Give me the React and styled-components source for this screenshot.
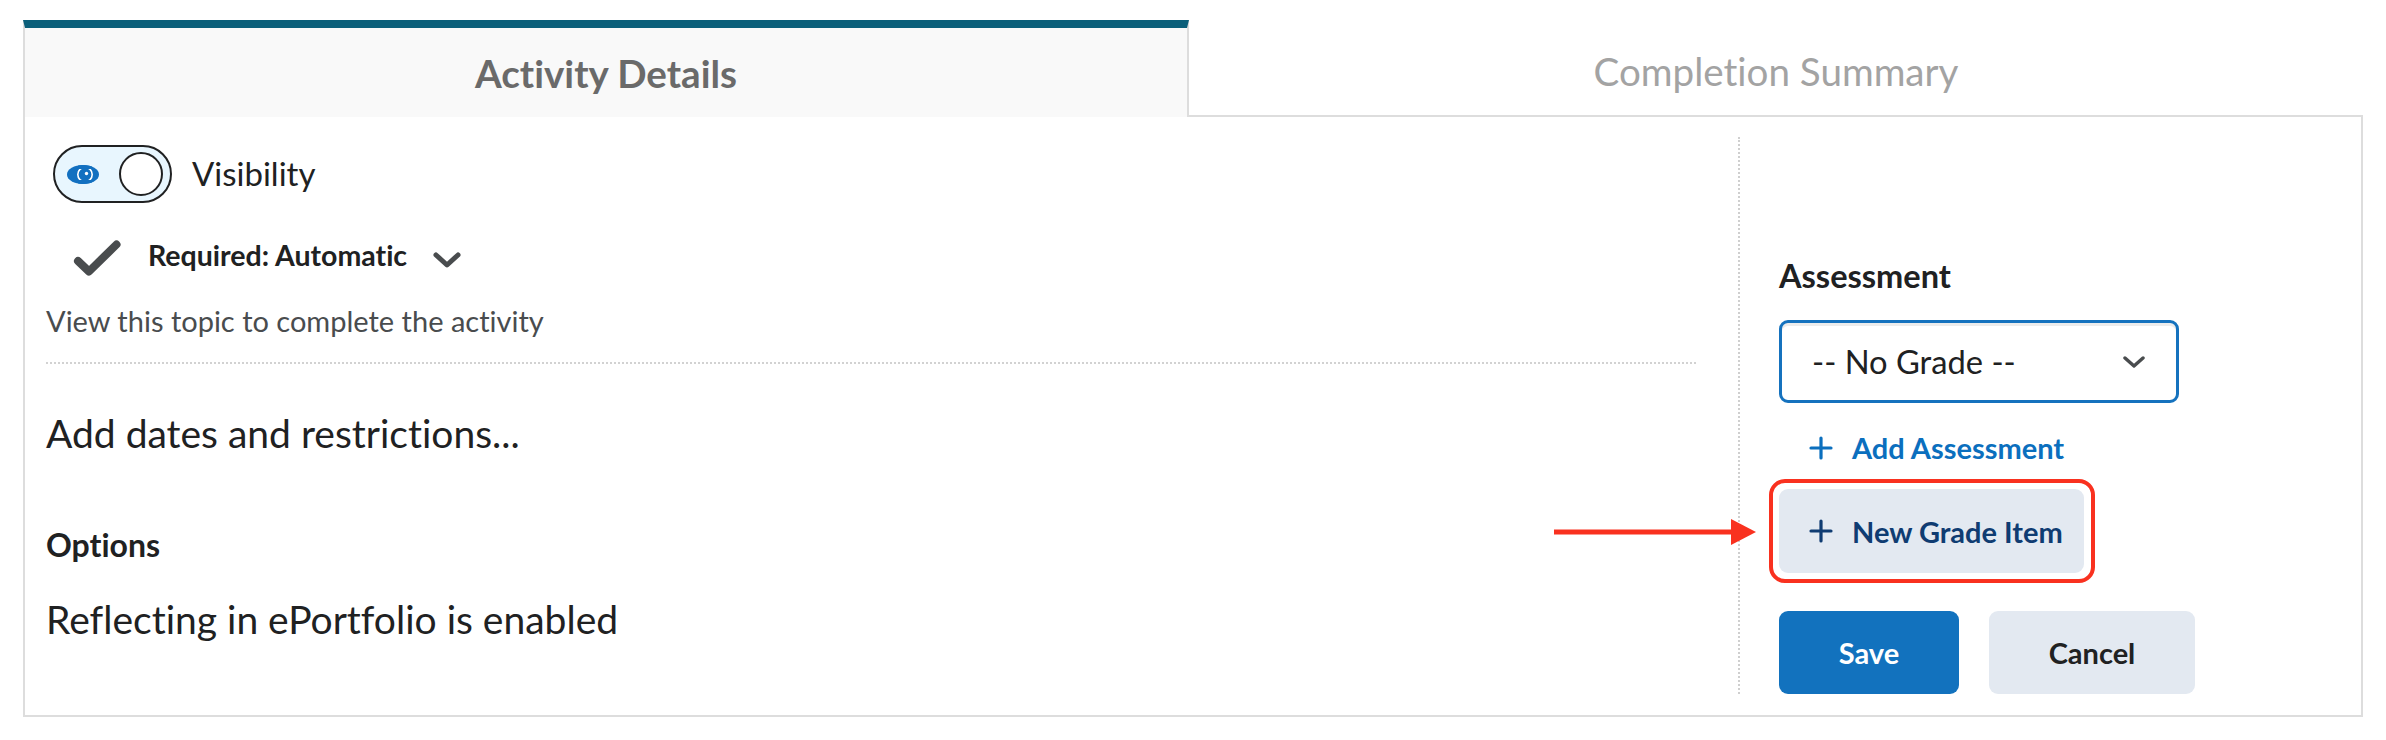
import styled, { createGlobalStyle } from 'styled-components'

const GlobalStyle = createGlobalStyle`
    body {
        margin: 0;
        background: #ffffff;
        font-family: Lato, "Open Sans", sans-serif;
        font-variant-ligatures: no-common-ligatures;
        color: #202122;
    }
`;

const Page = styled.div`
    padding: 20px 0 0 23px;
    width: 2340px;
`;

const Tabs = styled.div`
    display: flex;
    height: 97px;
`;

const Tab = styled.div`
    box-sizing: border-box;
    display: flex;
    align-items: center;
    justify-content: center;
    width: ${props => props.width}px;
    font-size: 38.6px;
    padding-top: ${props => props.active ? '0' : '7px'};
    background: ${props => props.active ? '#f9f9f9' : '#ffffff'};
    color: ${props => props.active ? '#6a6a6a' : '#a3a3a3'};
    font-weight: ${props => props.active ? 700 : 400};
    border-top: ${props => props.active ? '8px solid #0b5f7a' : 'none'};
    border-left: ${props => props.active ? '2px solid #dddddd' : 'none'};
    border-right: ${props => props.active ? '2px solid #dddddd' : 'none'};
    border-bottom: ${props => props.active ? 'none' : '2px solid #dddddd'};
`;

const Panel = styled.div`
    display: flex;
    border: 2px solid #dddddd;
    border-top: none;
    padding: 20px 0 21px;
`;

const LeftCol = styled.div`
    box-sizing: border-box;
    width: 1671px;
    padding-left: 21px;
    margin-right: 42px;
`;

const RightCol = styled.div`
    display: flex;
    flex-direction: column;
    align-items: flex-start;
    border-left: 2px dotted #cfcfcf;
    padding-left: 39px;
`;

const ToggleRow = styled.div`
    display: flex;
    align-items: center;
    margin: 8px 0 0 7px;
`;

const Toggle = styled.div`
    box-sizing: border-box;
    display: flex;
    align-items: center;
    justify-content: space-between;
    width: 119px;
    height: 58px;
    padding: 0 7px 0 12px;
    border: 2px solid #202122;
    border-radius: 29px;
    background: #e8f6fe;
`;

const Knob = styled.div`
    box-sizing: border-box;
    width: 44px;
    height: 44px;
    border: 2px solid #202122;
    border-radius: 50%;
    background: #ffffff;
`;

const ToggleLabel = styled.span`
    margin: 0 0 2px 20px;
    font-size: 33px;
    line-height: 40px;
`;

const RequiredRow = styled.div`
    display: flex;
    align-items: flex-start;
    margin: 37px 0 0 27px;
    height: 36px;
`;

const RequiredText = styled.span`
    margin-left: 27px;
    font-size: 28.5px;
    font-weight: 700;
    line-height: 30px;
`;

const Chevron = styled.svg`
    margin: ${props => props.offset || 0}px 0 0 26px;
    fill: none;
    stroke: #494c4e;
    stroke-linecap: round;
    stroke-linejoin: round;
`;

const Hint = styled.div`
    margin-top: 30px;
    font-size: 29px;
    line-height: 30px;
    color: #494c4e;
`;

const Divider = styled.div`
    margin-top: 26px;
    border-top: 2px dotted #d2d2d2;
`;

const BodyText = styled.div`
    margin-top: ${props => props.top}px;
    font-size: 39px;
    line-height: 40px;
`;

const Label = styled.div`
    margin-top: ${props => props.top}px;
    font-size: ${props => props.size}px;
    font-weight: 700;
    line-height: ${props => props.lh}px;
`;

const Select = styled.div`
    box-sizing: border-box;
    display: flex;
    align-items: center;
    justify-content: space-between;
    margin-top: 26px;
    width: 400px;
    height: 83px;
    padding: 0 31px 0 30px;
    border: 3px solid #1572be;
    border-radius: 9px;
    box-shadow: inset 0 3px 0 #ececec;
    font-size: 32.7px;
`;

const TextLink = styled.div`
    display: flex;
    align-items: center;
    margin-top: 29px;
    padding-left: 30px;
    color: #0b6fbe;
    font-size: 29px;
    font-weight: 700;
    line-height: 32px;
`;

const PlusIcon = styled.svg`
    margin-right: 19px;
    stroke: currentColor;
    stroke-width: 3.2;
    stroke-linecap: round;
`;

const Highlight = styled.div`
    position: relative;
    margin: 15px 0 0 -10px;
    padding: 6px 7px 6px 6px;
    border: 4px solid #f9311f;
    border-radius: 16px;
`;

const Arrow = styled.svg`
    position: absolute;
    left: -219px;
    top: 36px;
`;

const Button = styled.button`
    box-sizing: border-box;
    display: flex;
    align-items: center;
    justify-content: ${props => props.start ? 'flex-start' : 'center'};
    height: ${props => props.h || 83}px;
    width: ${props => props.w}px;
    padding: ${props => props.start ? '0 0 0 30px' : '0'};
    border: none;
    border-radius: 9px;
    font-family: Lato, "Open Sans", sans-serif;
    font-size: 29px;
    font-weight: 700;
    background: ${props => props.primary ? '#1272be' : '#e3e9f1'};
    color: ${props => props.primary ? '#ffffff' : props.color || '#202122'};
`;

const ButtonRow = styled.div`
    display: flex;
    gap: 30px;
    margin-top: 28px;
`;

const Eye = () => (
    <svg width="32" height="19" viewBox="0 0 32 19">
        <defs>
            <clipPath id="eyeclip">
                <ellipse cx="16" cy="9.5" rx="16" ry="9.5" />
            </clipPath>
        </defs>
        <ellipse cx="16" cy="9.5" rx="16" ry="9.5" fill="#1270c0" />
        <g clipPath="url(#eyeclip)">
            <circle cx="18" cy="9.5" r="7.2" fill="none" stroke="#fff" strokeWidth="1.6" />
            <rect x="11" y="0" width="14" height="4" fill="#1270c0" />
            <rect x="11" y="15" width="14" height="4" fill="#1270c0" />
        </g>
        <circle cx="19.5" cy="8.5" r="1.7" fill="#fff" />
    </svg>
)

const Plus = ({ size }) => (
    <PlusIcon width={size} height={size} viewBox="0 0 24 24">
        <path d="M12 2 V22 M2 12 H22" />
    </PlusIcon>
)

const App = () => {
    return (
        <>
            <GlobalStyle />
            <Page>
                <Tabs>
                    <Tab active width={1166}>Activity Details</Tab>
                    <Tab width={1174}>Completion Summary</Tab>
                </Tabs>
                <Panel>
                    <LeftCol>
                        <ToggleRow>
                            <Toggle>
                                <Eye />
                                <Knob />
                            </Toggle>
                            <ToggleLabel>Visibility</ToggleLabel>
                        </ToggleRow>
                        <RequiredRow>
                            <svg width="48" height="36" viewBox="0 0 48 36">
                                <path d="M5 21 L16 31.5 L43.5 4.5" fill="none" stroke="#494c4e" strokeWidth="8" strokeLinecap="round" strokeLinejoin="round" />
                            </svg>
                            <RequiredText>Required: Automatic</RequiredText>
                            <Chevron width="28" height="16" viewBox="0 0 28 16" offset={12} strokeWidth="5">
                                <path d="M3 3 L14 13 L25 3" />
                            </Chevron>
                        </RequiredRow>
                        <Hint>View this topic to complete the activity</Hint>
                        <Divider />
                        <BodyText top={49}>Add dates and restrictions...</BodyText>
                        <Label top={76} size={32} lh={32}>Options</Label>
                        <BodyText top={38}>Reflecting in ePortfolio is enabled</BodyText>
                    </LeftCol>
                    <RightCol>
                        <Label top={121} size={32.5} lh={36}>Assessment</Label>
                        <Select>
                            <span>-- No Grade --</span>
                            <svg width="22" height="12" viewBox="0 0 22 12" fill="none" stroke="#494c4e" strokeWidth="3.4" strokeLinecap="round" strokeLinejoin="round">
                                <path d="M2 2 L11 10 L20 2" />
                            </svg>
                        </Select>
                        <TextLink>
                            <Plus size={24} />
                            Add Assessment
                        </TextLink>
                        <Highlight>
                            <Arrow width="202" height="26" viewBox="0 0 202 26">
                                <rect x="0" y="10.5" width="180" height="5" fill="#f9311f" />
                                <path d="M177 0 L202 13 L177 26 Z" fill="#f9311f" />
                            </Arrow>
                            <Button start w={305} h={84} color="#0f3c72">
                                <Plus size={24} />
                                New Grade Item
                            </Button>
                        </Highlight>
                        <ButtonRow>
                            <Button primary w={180}>Save</Button>
                            <Button w={206}>Cancel</Button>
                        </ButtonRow>
                    </RightCol>
                </Panel>
            </Page>
        </>
    )
}

export default App
